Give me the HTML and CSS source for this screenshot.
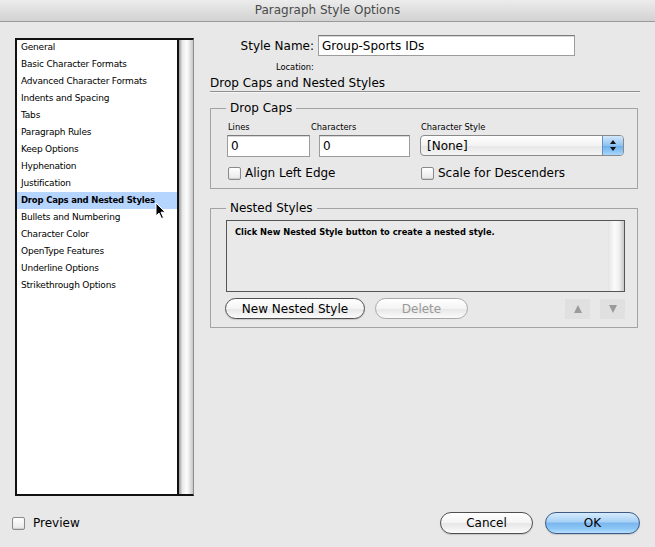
FILE: index.html
```html
<!DOCTYPE html>
<html lang="en">
<head>
    <meta charset="UTF-8">
    <title>Paragraph Style Options</title>
    <link rel="stylesheet" href="styles.css">
</head>
<body>
<div class="window">
    <div class="titlebar">Paragraph Style Options</div>

    <div class="content">
        <!-- Category list on the left -->
        <div class="sidebar">
            <ul class="category-list">
                <li>General</li>
                <li>Basic Character Formats</li>
                <li>Advanced Character Formats</li>
                <li>Indents and Spacing</li>
                <li>Tabs</li>
                <li>Paragraph Rules</li>
                <li>Keep Options</li>
                <li>Hyphenation</li>
                <li>Justification</li>
                <li class="selected">Drop Caps and Nested Styles</li>
                <li>Bullets and Numbering</li>
                <li>Character Color</li>
                <li>OpenType Features</li>
                <li>Underline Options</li>
                <li>Strikethrough Options</li>
            </ul>
            <div class="scrollbar"></div>
            <svg class="cursor" width="12" height="18" viewBox="0 0 12 18">
                <path d="M1 1 L1 14 L4 11 L6.5 16.5 L8.5 15.6 L6 10.2 L10.2 10.2 Z" fill="#000" stroke="#fff" stroke-width="1"/>
            </svg>
        </div>

        <!-- Options panel -->
        <div class="main">
            <div class="name-row">
                <label class="name-label" for="styleName">Style Name:</label>
                <input class="text-input name-input" id="styleName" type="text" value="Group-Sports IDs">
            </div>
            <div class="location">Location:</div>
            <div class="section-title">Drop Caps and Nested Styles</div>

            <fieldset class="group dropcaps">
                <legend>Drop Caps</legend>
                <div class="field-row">
                    <div class="field">
                        <span class="small-label">Lines</span>
                        <input class="text-input lines-input" type="text" value="0">
                    </div>
                    <div class="field">
                        <span class="small-label">Characters</span>
                        <input class="text-input chars-input" type="text" value="0">
                    </div>
                    <div class="field">
                        <span class="small-label">Character Style</span>
                        <div class="popup">
                            <span class="popup-value">[None]</span>
                            <span class="stepper">
                                <span class="tri-up"></span>
                                <span class="tri-down"></span>
                            </span>
                        </div>
                    </div>
                </div>
                <div class="check-row">
                    <label class="check align-check"><span class="box"></span>Align Left Edge</label>
                    <label class="check"><span class="box"></span>Scale for Descenders</label>
                </div>
            </fieldset>

            <fieldset class="group nested">
                <legend>Nested Styles</legend>
                <div class="nested-list">
                    <p class="hint">Click New Nested Style button to create a nested style.</p>
                    <div class="scrollbar"></div>
                </div>
                <div class="button-row">
                    <button class="aqua new-btn">New Nested Style</button>
                    <button class="aqua delete-btn" disabled>Delete</button>
                    <span class="spacer"></span>
                    <span class="arrow-btn"><span class="arrow-up"></span></span>
                    <span class="arrow-btn"><span class="arrow-down"></span></span>
                </div>
            </fieldset>
        </div>
    </div>

    <div class="footer">
        <label class="check preview-check"><span class="box"></span>Preview</label>
        <span class="spacer"></span>
        <button class="aqua cancel-btn">Cancel</button>
        <button class="aqua ok-btn">OK</button>
    </div>
</div>
</body>
</html>
```

FILE: styles.css
```css
/* Base window */
body {
    margin: 0;
    background-color: #e8e8e8;
    font-family: "DejaVu Sans", Verdana, sans-serif;
    color: #000;
}
.window {
    width: 655px;
    height: 547px;
    background-color: #e8e8e8;
}
.titlebar {
    height: 21px;
    line-height: 21px;
    text-align: center;
    font-size: 12px;
    color: #4a4a4a;
    background: linear-gradient(#ececec, #d2d2d2);
    border-bottom: 1px solid #9a9a9a;
}
.content {
    display: flex;
    height: 474px;
}

/* Category list */
.sidebar {
    position: relative;
    display: flex;
    margin: 16px 0 0 15px;
    width: 176px;
    height: 454px;
    border: 2px solid #111;
    border-right: 1px solid #8d8d8d;
}
.category-list {
    list-style: none;
    margin: 0;
    padding: 0;
    width: 160px;
    background-color: #fff;
    border-right: 2px solid #111;
}
.category-list li {
    height: 17px;
    line-height: 17px;
    padding-left: 4px;
    font-size: 9px;
    letter-spacing: -0.2px;
    white-space: nowrap;
}
.category-list li:first-child {
    margin-top: -1px;
}
.category-list li.selected {
    background-color: #b5d5ff;
    font-weight: bold;
    font-size: 8.5px;
}
.scrollbar {
    flex: 1;
    background: linear-gradient(to right, #9a9a9a, #e9e9e9 25%, #fdfdfd 55%, #e2e2e2 80%, #c4c4c4);
}
.cursor {
    position: absolute;
    left: 138px;
    top: 162px;
}

/* Options panel */
.main {
    margin: 13px 0 0 16px;
    width: 430px;
}
.name-row {
    display: flex;
    align-items: center;
}
.name-label {
    width: 104px;
    text-align: right;
    font-size: 12px;
    margin-right: 4px;
}
.text-input {
    box-sizing: border-box;
    height: 21px;
    padding: 0 3px;
    margin: 0;
    font-family: inherit;
    font-size: 12px;
    background-color: #fff;
    border: 1px solid #9c9c9c;
    border-top-color: #7b7b7b;
    box-shadow: inset 0 1px 0 #d8d8d8;
    outline: none;
}
.name-input {
    width: 257px;
}
.location {
    margin: 6px 0 0 66px;
    font-size: 8.3px;
    line-height: 11px;
}
.section-title {
    margin-top: 2px;
    font-size: 12px;
    line-height: 16px;
    border-bottom: 1px solid #8f8f8f;
    box-shadow: 0 1px 0 #f6f6f6;
}

/* Group boxes */
.group {
    margin: 8px 0 0 0;
    padding: 0 0 0 16px;
    width: 428px;
    box-sizing: border-box;
    border: 1px solid #a3a3a3;
    min-width: 0;
}
.group legend {
    margin-left: -1px;
    padding: 0 4px;
    font-size: 12px;
    line-height: 16px;
}
.dropcaps {
    height: 89px;
}
.nested {
    margin-top: 11px;
    height: 128px;
}
.field-row {
    display: flex;
    margin-top: 5px;
}
.field {
    display: flex;
    flex-direction: column;
}
.small-label {
    font-size: 8.3px;
    line-height: 12px;
    padding-left: 1px;
    margin-bottom: 2px;
}
.lines-input {
    width: 83px;
    height: 22px;
}
.chars-input {
    width: 91px;
    height: 22px;
    margin-left: 9px;
}
.field:last-child {
    margin-left: 10px;
}
.popup {
    box-sizing: border-box;
    display: flex;
    align-items: center;
    width: 204px;
    height: 21px;
    border: 1px solid #8a8a8a;
    border-radius: 4px;
    background: linear-gradient(#ffffff, #f2f2f2 50%, #e6e6e6 51%, #f4f4f4);
    overflow: hidden;
}
.popup-value {
    flex: 1;
    padding-left: 6px;
    font-size: 12px;
}
.stepper {
    display: flex;
    flex-direction: column;
    align-items: center;
    justify-content: center;
    gap: 3px;
    width: 20px;
    height: 100%;
    background: linear-gradient(#d2e7fb, #8ec3f1 50%, #6aaeeb 51%, #a9d6fb);
    border-left: 1px solid #6a8fb8;
}
.tri-up, .tri-down {
    width: 0;
    height: 0;
    border-left: 3px solid transparent;
    border-right: 3px solid transparent;
}
.tri-up {
    border-bottom: 4px solid #111;
}
.tri-down {
    border-top: 4px solid #111;
}

/* Checkboxes */
.check-row {
    display: flex;
    margin-top: 8px;
    height: 16px;
    align-items: center;
}
.check {
    display: flex;
    align-items: center;
    font-size: 12px;
}
.check .box {
    box-sizing: border-box;
    width: 13px;
    height: 13px;
    margin-right: 4px;
    border: 1px solid #8a8a8a;
    border-radius: 2px;
    background: linear-gradient(#ffffff, #e8e8e8);
    box-shadow: inset 0 -1px 1px #d0d0d0;
}
.align-check {
    width: 193px;
    padding-left: 1px;
}

/* Nested styles list */
.nested-list {
    box-sizing: border-box;
    display: flex;
    width: 399px;
    height: 72px;
    margin: 4px 0 0 -1px;
    background-color: #e9e9e9;
    border: 1px solid #555;
}
.hint {
    flex: 1;
    margin: 6px 0 0 8px;
    font-size: 8.3px;
    font-weight: bold;
}
.nested-list .scrollbar {
    flex: 0 0 16px;
    background: linear-gradient(to right, #e4e4e4, #fafafa 40%, #f0f0f0 70%, #c8c8c8);
}
.button-row {
    display: flex;
    align-items: center;
    margin-top: 6px;
    width: 400px;
    margin-left: -2px;
}
.spacer {
    flex: 1;
}

/* Aqua style buttons */
.aqua {
    box-sizing: border-box;
    height: 21px;
    padding: 0;
    font-family: inherit;
    font-size: 12px;
    color: #000;
    border: 1px solid #4f4f4f;
    border-radius: 11px;
    background: linear-gradient(#ffffff, #f4f4f4 50%, #e6e6e6 51%, #fbfbfb);
    box-shadow: 0 1px 1px rgba(0, 0, 0, 0.15);
}
.new-btn {
    width: 140px;
}
.delete-btn {
    width: 93px;
    margin-left: 10px;
    color: #999;
    border-color: #a9a9a9;
    box-shadow: none;
}
.arrow-btn {
    display: flex;
    align-items: center;
    justify-content: center;
    width: 25px;
    height: 20px;
    background-color: #e0e0e0;
}
.arrow-btn + .arrow-btn {
    margin-left: 10px;
}
.arrow-up, .arrow-down {
    width: 0;
    height: 0;
    border-left: 4px solid transparent;
    border-right: 4px solid transparent;
}
.arrow-up {
    border-bottom: 8px solid #9a9a9a;
}
.arrow-down {
    border-top: 8px solid #9a9a9a;
}

/* Footer */
.footer {
    display: flex;
    align-items: center;
    height: 22px;
    margin-top: 16px;
    padding: 0 15px 0 12px;
}
.preview-check .box {
    margin-right: 8px;
}
.cancel-btn {
    width: 93px;
    height: 22px;
}
.ok-btn {
    width: 95px;
    height: 22px;
    margin-left: 12px;
    border-color: #3d5a86;
    background: linear-gradient(#d6ebfc, #a6d0f5 45%, #7ab6ee 50%, #8ec8f6 80%, #b9e0fd);
}
```
